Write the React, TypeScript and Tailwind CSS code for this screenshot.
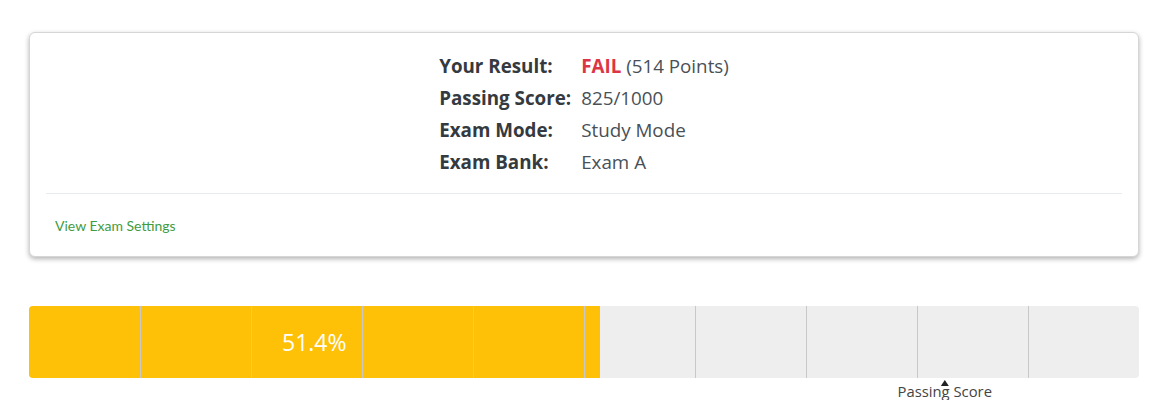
const rows: { label: string; value: React.ReactNode }[] = [
  {
    label: 'Your Result:',
    value: (
      <>
        <span className="font-bold text-[#dc3545]">FAIL</span> (514 Points)
      </>
    ),
  },
  { label: 'Passing Score:', value: '825/1000' },
  { label: 'Exam Mode:', value: 'Study Mode' },
  { label: 'Exam Bank:', value: 'Exam A' },
];

const score = 51.4;
const passing = 82.5;

export default function App() {
  return (
    <div className="min-h-[400px] bg-white pt-8 pl-[29px] font-['Open_Sans',sans-serif]">
      {/* Result card */}
      <div className="w-[1110px] rounded-md border border-[#d6d6d6] bg-white shadow-[0_2px_5px_rgba(0,0,0,0.3)]">
        <div className="flex justify-center pt-[17px]">
          <div className="grid grid-cols-[142px_auto] text-[18.8px] leading-8 text-[#343a40]">
            {rows.map((r) => (
              <div key={r.label} className="contents">
                <div className="font-bold">{r.label}</div>
                <div className="text-[#495057]">{r.value}</div>
              </div>
            ))}
          </div>
        </div>
        <div className="mx-4 mt-[15px] border-t border-[#e9ecef]" />
        <div className="pl-[25px] pt-[22px] pb-5 font-['Lato',sans-serif] text-[14px] leading-5 text-[#3f9c3f]">
          View Exam Settings
        </div>
      </div>

      {/* Score bar */}
      <div className="relative mt-[49px] flex h-[72px] w-[1110px] overflow-hidden rounded-[4px] bg-[#eeeeee]">
        <div
          className="flex h-full items-center justify-center bg-[#ffc107] text-[23px] text-white"
          style={{ width: `${score}%` }}
        >
          {score}%
        </div>
        <div className="absolute inset-0 grid grid-cols-10">
          {Array.from({ length: 10 }).map((_, i) => (
            <div key={i} className={i > 0 ? 'border-l border-[#c8c8c8]' : ''} />
          ))}
        </div>
      </div>

      {/* Passing marker */}
      <div className="relative h-6 w-[1110px]">
        <div
          className="absolute top-[2px] flex -translate-x-1/2 flex-col items-center"
          style={{ left: `${passing}%` }}
        >
          <div className="h-0 w-0 border-x-[4px] border-b-[6px] border-x-transparent border-b-[#222]" />
          <div className="-mt-[5px] text-[14.8px] leading-5 text-[#444]">Passing Score</div>
        </div>
      </div>
    </div>
  );
}
